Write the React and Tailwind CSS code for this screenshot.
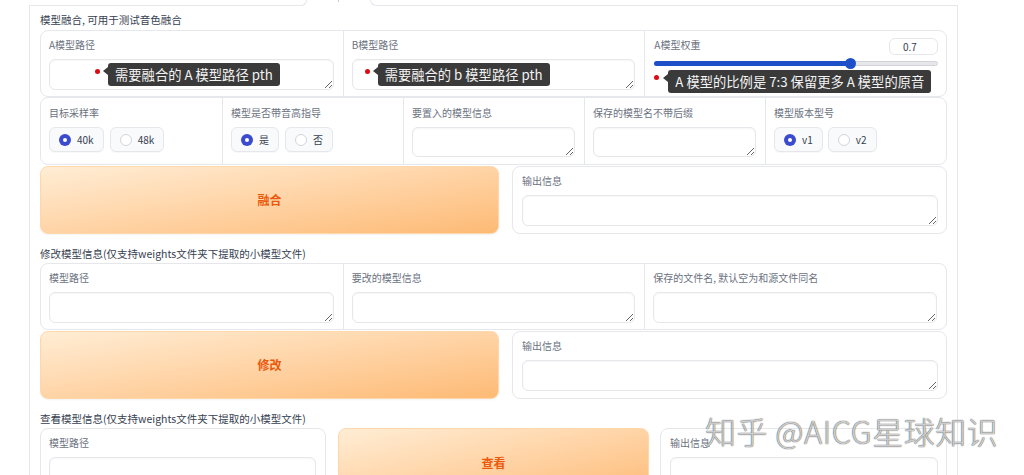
import React from 'react';

const Label = ({ children }) => (
  <div className="text-[10px] leading-[13px] text-[#6b7280] whitespace-nowrap">{children}</div>
);

const Area = ({ h = 'h-[31px]' }) => (
  <textarea
    className={`block w-full ${h} rounded-md border border-[#e5e7eb] bg-white shadow-[inset_0_1px_2px_rgba(0,0,0,0.04)] resize-y outline-none`}
  />
);

const Title = ({ children, className = '' }) => (
  <div className={`text-[10.5px] leading-[14px] text-[#374151] whitespace-nowrap ${className}`}>{children}</div>
);

const Tip = ({ text, dot, box }) => (
  <>
    <span className={`absolute w-[5px] h-[5px] rounded-full bg-[#dc0a12] ${dot}`} />
    <div className={`absolute h-[23px] flex items-center px-[7px] rounded-[3px] bg-[#3a3a3a] text-[13.3px] text-[#f3f3f3] whitespace-nowrap ${box}`}>
      <span className="absolute -left-[5px] top-[4px] w-0 h-0 border-y-[4px] border-y-transparent border-r-[5px] border-r-[#3a3a3a]" />
      {text}
    </div>
  </>
);

const Radio = ({ label, checked }) => (
  <div className="flex items-center h-[25px] px-[9px] gap-[6px] rounded-md border border-[#e5e7eb] bg-[#f9fafb] shadow-[0_1px_1px_rgba(0,0,0,0.03)]">
    {checked ? (
      <span className="w-[12px] h-[12px] rounded-full bg-[#3b4bd0] flex items-center justify-center">
        <span className="w-[4px] h-[4px] rounded-full bg-white" />
      </span>
    ) : (
      <span className="w-[12px] h-[12px] rounded-full border border-[#d1d5db] bg-white" />
    )}
    <span className="text-[10px] leading-[13px] text-[#374151]">{label}</span>
  </div>
);

const Button = ({ children, className = '' }) => (
  <button
    className={`h-[68px] rounded-lg border border-[#fed7aa] bg-linear-to-br from-[#ffedd5] to-[#fdba74] text-[12px] font-bold text-[#ea580c] shadow-[0_1px_2px_rgba(0,0,0,0.05)] ${className}`}
  >
    {children}
  </button>
);

const Output = ({ className = '' }) => (
  <div className={`rounded-lg border border-[#e5e7eb] bg-white pl-[9px] pr-[8px] pt-[7px] pb-[7px] ${className}`}>
    <Label>输出信息</Label>
    <div className="mt-[8px]">
      <Area />
    </div>
  </div>
);

const Field = ({ label, children, className = '' }) => (
  <div className={`relative pl-[8px] pr-[9px] pt-[7px] pb-[6px] ${className}`}>
    <Label>{label}</Label>
    <div className="mt-[8px]">{children}</div>
  </div>
);

export default function App() {
  return (
    <div className="relative w-[1024px] h-[475px] overflow-hidden bg-white font-['Noto_Sans_CJK_SC','Noto_Sans',sans-serif]">
      <div className="ml-[29px] w-[929px]">
        {/* tab strip */}
        <div className="flex h-[6px]">
          <div className="w-[278px] border-b border-r border-[#e5e7eb] rounded-br-md" />
          <div className="w-[63px] flex justify-center">
            <span className="w-[1px] h-[2px] bg-[#c9c9c9]" />
          </div>
          <div className="flex-1 border-b border-l border-[#e5e7eb] rounded-bl-md" />
        </div>

        <div className="border-x border-[#e5e7eb] px-[10px] pb-[10px]">
          <Title className="pt-[7px]">模型融合, 可用于测试音色融合</Title>

          <div className="mt-[3px] grid grid-cols-3 rounded-lg border border-[#e5e7eb] bg-white">
            <Field label="A模型路径">
              <Area />
              <Tip text="需要融合的 A 模型路径 pth" dot="left-[54px] top-[38px]" box="left-[67px] top-[32px]" />
            </Field>
            <Field label="B模型路径" className="border-l border-[#e5e7eb]">
              <Area />
              <Tip text="需要融合的 b 模型路径 pth" dot="left-[21px] top-[38px]" box="left-[34px] top-[32px]" />
            </Field>
            <div className="relative pl-[9px] pr-[8px] pt-[7px] border-l border-[#e5e7eb]">
              <div className="flex justify-between items-start">
                <Label>A模型权重</Label>
                <div className="w-[49px] h-[17px] rounded-md border border-[#e5e7eb] text-[10px] leading-[15px] text-[#374151] pl-[13px]">0.7</div>
              </div>
              <div className="relative mt-[6px] h-[5px] rounded-full bg-[#e5e7eb] border border-[#d4d4d8]">
                <div className="absolute -left-[1px] -top-[1px] h-[5px] w-[69%] rounded-full bg-[#1d4fc8]" />
                <div className="absolute left-[69%] -top-[4px] -ml-[5px] w-[11px] h-[11px] rounded-full bg-[#1d4fc8]" />
              </div>
              <Tip text="A 模型的比例是 7:3 保留更多 A 模型的原音" dot="left-[9px] top-[44px]" box="left-[23px] top-[39px] h-[22px]" />
            </div>
          </div>

          <div className="grid grid-cols-5 rounded-lg border border-[#e5e7eb] bg-white">
            <Field label="目标采样率" className="pt-[8px]">
              <div className="flex gap-[6px]">
                <Radio label="40k" checked />
                <Radio label="48k" />
              </div>
            </Field>
            <Field label="模型是否带音高指导" className="pt-[8px] border-l border-[#e5e7eb]">
              <div className="flex gap-[6px]">
                <Radio label="是" checked />
                <Radio label="否" />
              </div>
            </Field>
            <Field label="要置入的模型信息" className="pt-[8px] pb-[7px] border-l border-[#e5e7eb]">
              <Area h="h-[30px]" />
            </Field>
            <Field label="保存的模型名不带后缀" className="pt-[8px] pb-[7px] border-l border-[#e5e7eb]">
              <Area h="h-[30px]" />
            </Field>
            <Field label="模型版本型号" className="pt-[8px] border-l border-[#e5e7eb]">
              <div className="flex gap-[5px]">
                <Radio label="v1" checked />
                <Radio label="v2" />
              </div>
            </Field>
          </div>

          <div className="mt-[1px] flex gap-[13px]">
            <Button className="w-[459px]">融合</Button>
            <Output className="flex-1" />
          </div>

          <Title className="mt-[13px]">修改模型信息(仅支持weights文件夹下提取的小模型文件)</Title>
          <div className="mt-[2px] grid grid-cols-3 rounded-lg border border-[#e5e7eb] bg-white">
            <Field label="模型路径">
              <Area />
            </Field>
            <Field label="要改的模型信息" className="border-l border-[#e5e7eb]">
              <Area />
            </Field>
            <Field label="保存的文件名, 默认空为和源文件同名" className="border-l border-[#e5e7eb]">
              <Area />
            </Field>
          </div>
          <div className="mt-[1px] flex gap-[13px]">
            <Button className="w-[459px]">修改</Button>
            <Output className="flex-1" />
          </div>

          <Title className="mt-[13px]">查看模型信息(仅支持weights文件夹下提取的小模型文件)</Title>
          <div className="mt-[2px] flex">
            <div className="w-[286px] rounded-lg border border-[#e5e7eb] bg-white pl-[8px] pr-[9px] pt-[7px] pb-[7px]">
              <Label>模型路径</Label>
              <div className="mt-[8px]">
                <Area />
              </div>
            </div>
            <Button className="ml-[12px] w-[311px] h-[70px]">查看</Button>
            <Output className="ml-[11px] flex-1" />
          </div>
        </div>
      </div>

      <div className="absolute left-[705px] top-[411px] text-[31px] leading-[40px] font-light tracking-[0.5px] text-[rgba(255,255,255,0.75)] [text-shadow:0_0_1px_rgba(0,0,0,0.7),0_0_1px_rgba(0,0,0,0.5)] whitespace-nowrap">
        知乎 @AICG星球知识
      </div>
    </div>
  );
}
